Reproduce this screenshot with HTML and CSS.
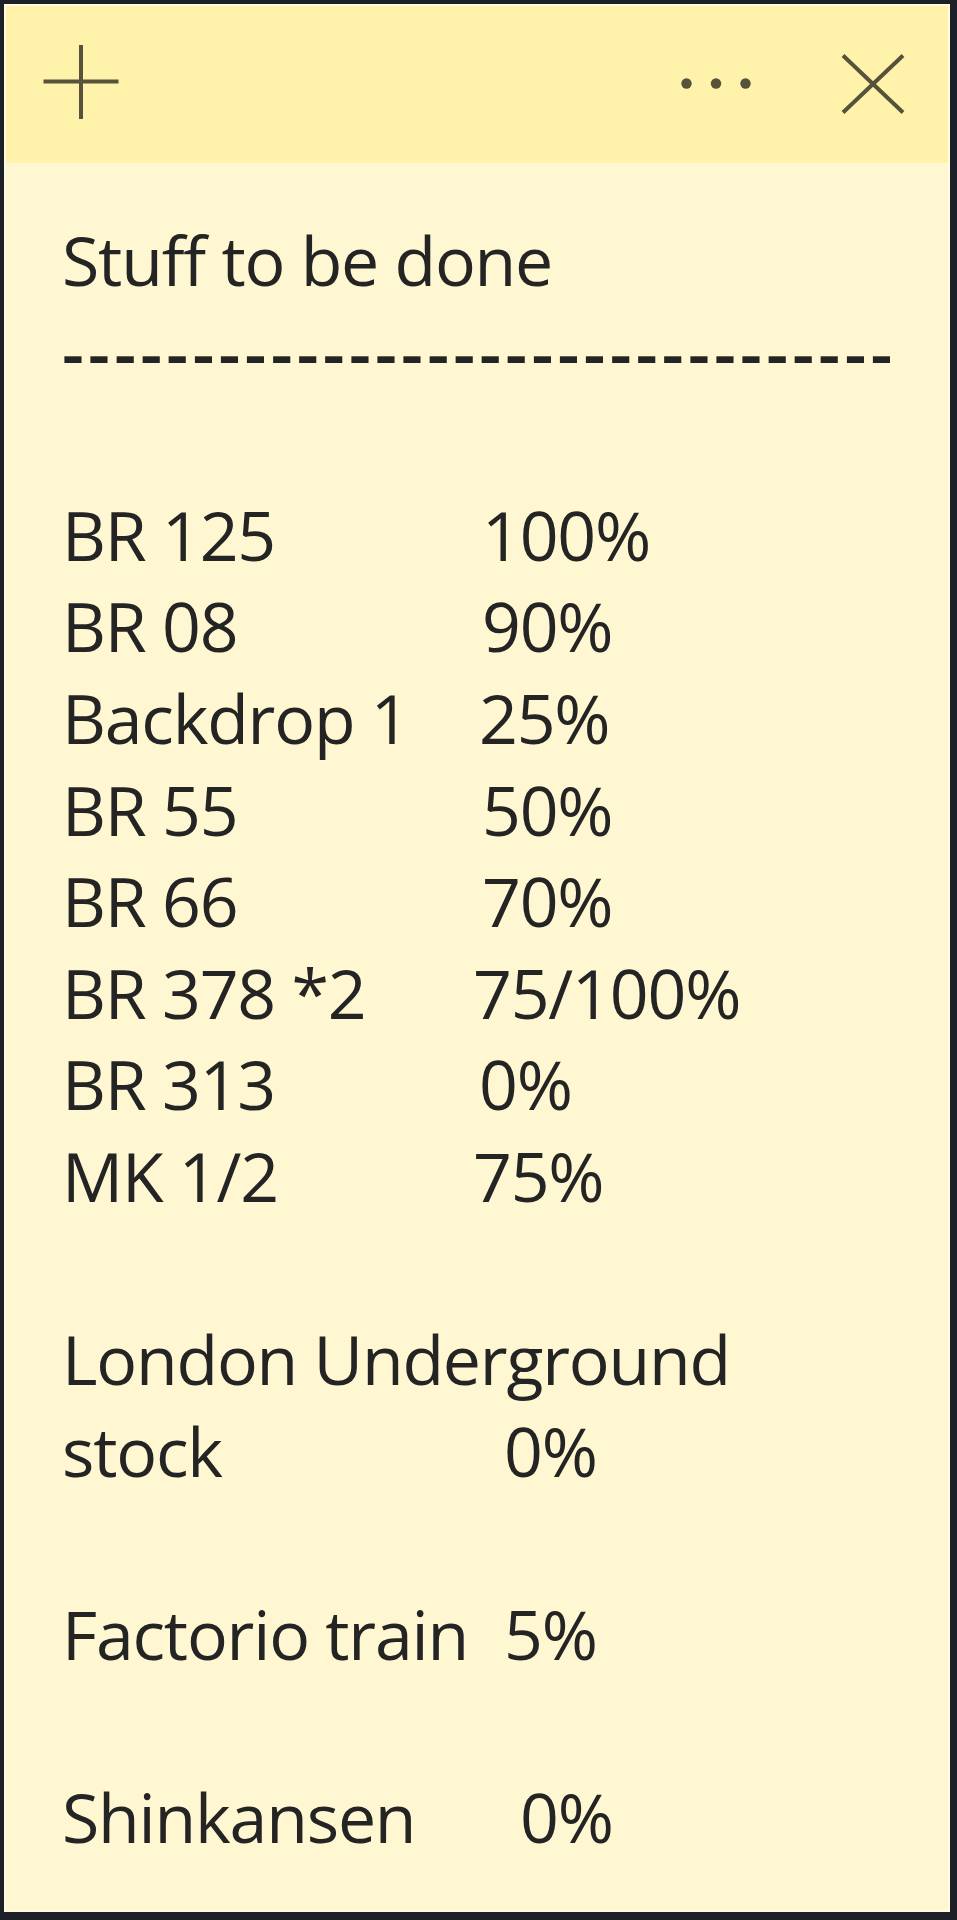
FILE: index.html
```html
<!DOCTYPE html>
<html lang="en">
<head>
<meta charset="utf-8">
<title>Sticky Note</title>
<link rel="stylesheet" href="styles.css">
</head>
<body>
<div class="window">
  <header class="titlebar">
    <svg class="icon" viewBox="0 0 80 80" aria-label="New note">
      <path d="M40 -1 V74 M2.5 36.5 H77.5" />
    </svg>
    <svg class="icon more" viewBox="0 0 80 80" aria-label="Menu">
      <circle cx="10.5" cy="38.5" r="5.2" />
      <circle cx="40" cy="38.5" r="5.2" />
      <circle cx="69.5" cy="38.5" r="5.2" />
    </svg>
    <svg class="icon" viewBox="0 0 80 80" aria-label="Close">
      <path d="M10 10.5 L70 67.5 M70 10.5 L10 67.5" />
    </svg>
  </header>
  <main class="note">
    <div class="line">Stuff to be done</div>
    <div class="line dashes">--------------------------------</div>

    <section class="group">
      <div class="row"><span class="name">BR 125</span><span class="val">100%</span></div>
      <div class="row"><span class="name">BR 08</span><span class="val">90%</span></div>
      <div class="row tab-b"><span class="name">Backdrop 1</span><span class="val">25%</span></div>
      <div class="row"><span class="name">BR 55</span><span class="val">50%</span></div>
      <div class="row"><span class="name">BR 66</span><span class="val">70%</span></div>
      <div class="row tab-c"><span class="name">BR 378 *2</span><span class="val">75/100%</span></div>
      <div class="row tab-b"><span class="name">BR 313</span><span class="val">0%</span></div>
      <div class="row tab-c"><span class="name">MK 1/2</span><span class="val">75%</span></div>
    </section>

    <section class="group">
      <div class="line">London Underground</div>
      <div class="row tab-d"><span class="name">stock</span><span class="val">0%</span></div>
    </section>

    <section class="group">
      <div class="row tab-d"><span class="name">Factorio train</span><span class="val">5%</span></div>
    </section>

    <section class="group">
      <div class="row tab-e"><span class="name">Shinkansen</span><span class="val">0%</span></div>
    </section>
  </main>
</div>
</body>
</html>
```

FILE: styles.css
```css
html, body {
  margin: 0;
  padding: 0;
}

body {
  background: #1d2027;
  width: 957px;
  height: 1920px;
  overflow: hidden;
}

.window {
  margin: 4px 7px 8px 4px;
  height: 1904px;
  border: 2px solid #fffae0;
  background: #fff7d1;
  display: flex;
  flex-direction: column;
}

.titlebar {
  height: 157px;
  flex: 0 0 157px;
  background: #fff2ab;
  display: flex;
  align-items: center;
  padding: 0 35px;
}

.icon {
  width: 80px;
  height: 80px;
  flex: 0 0 80px;
  fill: #57523a;
  stroke: #57523a;
  stroke-width: 4;
  stroke-linecap: butt;
}

.icon circle {
  stroke: none;
}

.more {
  margin-left: auto;
  margin-right: 77px;
}

.note {
  flex: 1;
  padding: 51px 40px 0 56px;
  font-family: "Open Sans", "Noto Sans", sans-serif;
  font-size: 68px;
  line-height: 91.6px;
  letter-spacing: -1.2px;
  color: #242424;
}

.line {
  white-space: nowrap;
}

.dashes {
  letter-spacing: 4.2px;
  font-weight: 600;
}

.group {
  margin-top: 91.6px;
}

.row {
  display: grid;
  grid-template-columns: 420px auto;
  white-space: nowrap;
}

.row.tab-b {
  grid-template-columns: 417px auto;
}

.row.tab-c {
  grid-template-columns: 411px auto;
}

.row.tab-d {
  grid-template-columns: 442px auto;
}

.row.tab-e {
  grid-template-columns: 458px auto;
}
```
